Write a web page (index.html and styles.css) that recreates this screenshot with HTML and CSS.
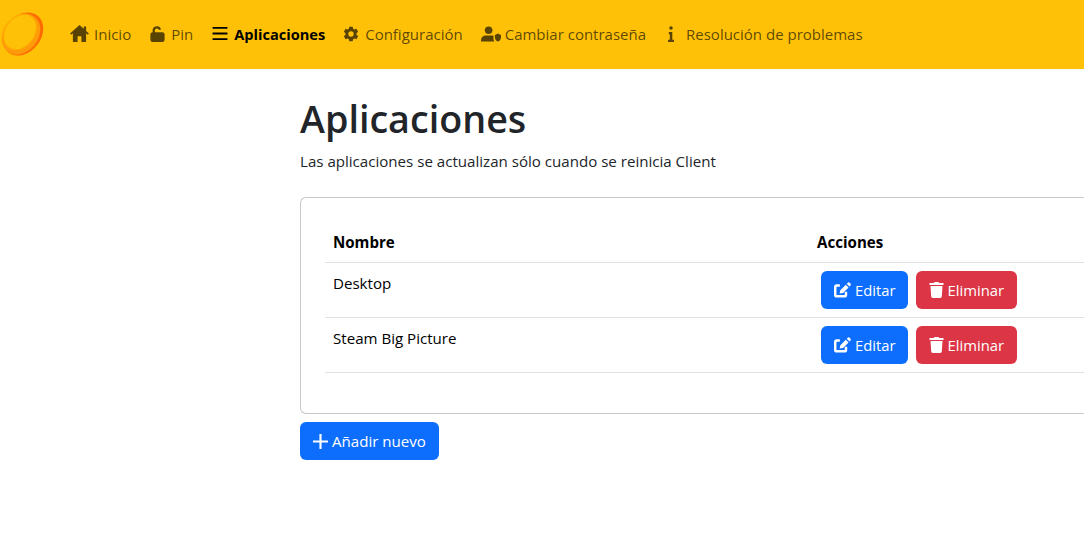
FILE: index.html
```html
<!DOCTYPE html>
<html lang="es">
<head>
    <meta charset="UTF-8">
    <meta name="viewport" content="width=device-width, initial-scale=1.0">
    <title>Aplicaciones</title>
    <link rel="stylesheet" href="styles.css">
</head>
<body>
    <nav class="navbar">
        <svg class="logo" viewBox="0 0 46 50" aria-label="Logo">
            <ellipse cx="23" cy="25" rx="18" ry="23.500" transform="rotate(38 23 25)" fill="#ff6a00"/>
            <ellipse cx="21" cy="25" rx="17.500" ry="22" transform="rotate(38 21 25)" fill="#ff9a0a"/>
            <ellipse cx="20" cy="23" rx="14.500" ry="19" transform="rotate(38 20 23)" fill="#ffc107" stroke="#ffae00"/>
        </svg>
        <a class="nav-link nav-link-wide" href="#">
            <svg class="icon icon-home" viewBox="0 0 20 18"><path d="M10 0 0 9l1.200 1.300L3 8.800V18h5v-6h4v6h5V8.800l1.800 1.500L20 9l-3-2.700V1.500h-2.500v2.600z"/></svg>
            <span>Inicio</span>
        </a>
        <a class="nav-link nav-link-wide" href="#">
            <svg class="icon icon-pin" viewBox="0 0 16 18"><path d="M2.500 7V5a4.800 4.800 0 0 1 9.500-1l-2.300.6A2.400 2.400 0 0 0 5 5v2h8.500A2.500 2.500 0 0 1 16 9.500V15.500A2.500 2.500 0 0 1 13.500 18h-11A2.500 2.500 0 0 1 0 15.500V9.500A2.500 2.500 0 0 1 2.500 7z"/></svg>
            <span>Pin</span>
        </a>
        <a class="nav-link active" href="#">
            <svg class="icon icon-bars" viewBox="0 0 16 14"><path d="M0 0h16v2H0zM0 6h16v2H0zM0 12h16v2H0z"/></svg>
            <span>Aplicaciones</span>
        </a>
        <a class="nav-link" href="#">
            <svg class="icon icon-gear" viewBox="0 0 24 24"><path fill-rule="evenodd" d="M9.500 1h5l.8 3.200 1.700 1 3.200-.9 2.500 4.300-2.400 2.300v2.200l2.400 2.300-2.500 4.300-3.200-.9-1.700 1-.8 3.200h-5l-.8-3.200-1.700-1-3.200.9-2.500-4.300 2.400-2.300v-2.200L1.300 8.600l2.500-4.300 3.200.9 1.700-1zM12 8a4 4 0 1 0 0 8 4 4 0 0 0 0-8z"/></svg>
            <span>Configuración</span>
        </a>
        <a class="nav-link" href="#">
            <svg class="icon icon-user" viewBox="0 0 21 16"><circle cx="8" cy="4" r="4"/><path d="M5 9.500h6c.8 0 1.500.1 2.100.4V13c0 1 .4 2 1 3H0v-1.500A5 5 0 0 1 5 9.500z"/><path d="M17.800 7.500 21 9v2.500c0 2.300-1.300 3.800-3.200 4.500-1.900-.7-3.200-2.200-3.200-4.500V9z"/></svg>
            <span>Cambiar contraseña</span>
        </a>
        <a class="nav-link" href="#">
            <svg class="icon icon-info" viewBox="0 0 8 16"><circle cx="4" cy="2" r="1.800"/><path d="M1.800 6h3.500v7.800H7V16H1v-2.200h1.800V8.200h-1z"/></svg>
            <span>Resolución de problemas</span>
        </a>
    </nav>

    <main class="container">
        <h1>Aplicaciones</h1>
        <p class="subtitle">Las aplicaciones se actualizan sólo cuando se reinicia Client</p>

        <div class="card">
            <table class="apps-table">
                <thead>
                    <tr>
                        <th class="col-name">Nombre</th>
                        <th>Acciones</th>
                    </tr>
                </thead>
                <tbody>
                    <tr>
                        <td>Desktop</td>
                        <td>
                            <div class="actions">
                                <button class="btn btn-primary" type="button">
                                    <svg class="btn-icon" viewBox="0 0 18 16"><path d="M16.800.500a1.700 1.700 0 0 0-2.400 0l-.9.900 2.900 2.900.9-.9a1.700 1.700 0 0 0 0-2.400zM12.500 2.400 6.700 8.200 6 11.800l3.600-.7 5.800-5.800zM3 2a3 3 0 0 0-3 3v8a3 3 0 0 0 3 3h8a3 3 0 0 0 3-3V9.800h-2.600V13a.4.4 0 0 1-.4.4H3a.4.4 0 0 1-.4-.4V5a.4.4 0 0 1 .4-.4h3.200V2z"/></svg>
                                    <span>Editar</span>
                                </button>
                                <button class="btn btn-danger" type="button">
                                    <svg class="btn-icon btn-icon-trash" viewBox="0 0 14 16"><path d="M4.500.600 4.200 1H0v2h14V1H9.800L9.500.600A1 1 0 0 0 8.600 0H5.400a1 1 0 0 0-.9.600zM1 4l.7 10.600A1.500 1.500 0 0 0 3.200 16h7.600a1.500 1.500 0 0 0 1.500-1.400L13 4z"/></svg>
                                    <span>Eliminar</span>
                                </button>
                            </div>
                        </td>
                    </tr>
                    <tr>
                        <td>Steam Big Picture</td>
                        <td>
                            <div class="actions">
                                <button class="btn btn-primary" type="button">
                                    <svg class="btn-icon" viewBox="0 0 18 16"><path d="M16.800.500a1.700 1.700 0 0 0-2.400 0l-.9.900 2.900 2.900.9-.9a1.700 1.700 0 0 0 0-2.400zM12.500 2.400 6.700 8.200 6 11.800l3.600-.7 5.800-5.800zM3 2a3 3 0 0 0-3 3v8a3 3 0 0 0 3 3h8a3 3 0 0 0 3-3V9.800h-2.600V13a.4.4 0 0 1-.4.4H3a.4.4 0 0 1-.4-.4V5a.4.4 0 0 1 .4-.4h3.200V2z"/></svg>
                                    <span>Editar</span>
                                </button>
                                <button class="btn btn-danger" type="button">
                                    <svg class="btn-icon btn-icon-trash" viewBox="0 0 14 16"><path d="M4.500.600 4.200 1H0v2h14V1H9.800L9.500.600A1 1 0 0 0 8.600 0H5.400a1 1 0 0 0-.9.600zM1 4l.7 10.600A1.500 1.500 0 0 0 3.200 16h7.600a1.500 1.500 0 0 0 1.500-1.400L13 4z"/></svg>
                                    <span>Eliminar</span>
                                </button>
                            </div>
                        </td>
                    </tr>
                </tbody>
            </table>
        </div>

        <button class="btn btn-primary btn-add" type="button">
            <svg class="btn-icon btn-icon-plus" viewBox="0 0 14 14"><path d="M6 0h2v6h6v2H8v6H6V8H0V6h6z"/></svg>
            <span>Añadir nuevo</span>
        </button>
    </main>
</body>
</html>
```

FILE: styles.css
```css
* {
    box-sizing: border-box;
}

body {
    margin: 0;
    font-family: "Open Sans", "Noto Sans", sans-serif;
    font-size: 16px;
    line-height: 24px;
    color: #212529;
    background-color: #fff;
}

.navbar {
    display: flex;
    align-items: center;
    height: 69px;
    padding-bottom: 2px;
    background-color: #ffc107;
}

.logo {
    width: 46px;
    height: 50px;
    flex-shrink: 0;
    margin-right: 24px;
}

.nav-link {
    display: flex;
    align-items: center;
    gap: 6px;
    margin-right: 18px;
    color: rgba(0, 0, 0, 0.65);
    text-decoration: none;
    font-size: 15px;
    white-space: nowrap;
}

.nav-link-wide {
    margin-right: 19px;
}

.nav-link.active {
    color: #000;
    font-size: 14.6px;
    font-weight: 700;
}

.icon {
    height: 16px;
    flex-shrink: 0;
    fill: currentColor;
}

.icon-home {
    width: 19px;
    height: 17px;
    margin-right: -1px;
}

.icon-pin {
    width: 15px;
}

.icon-bars {
    width: 16px;
    height: 13px;
}

.icon-gear {
    width: 16px;
}

.icon-user {
    width: 20px;
    margin-right: -2px;
}

.icon-info {
    width: 8px;
    margin: 0 5px 0 3px;
}

.container {
    margin-left: 300px;
    padding-top: 26px;
}

h1 {
    margin: 0 0 6px;
    font-size: 37.7px;
    font-weight: 600;
    line-height: 48px;
}

.subtitle {
    margin: 0 0 24px;
    font-size: 15.1px;
}

.card {
    padding: 24px 0 24px 24px;
    height: 217px;
    border: 1px solid #c8c8c8;
    border-right: none;
    border-radius: 6px 0 0 6px;
}

.apps-table {
    width: 100%;
    border-collapse: collapse;
    color: #000;
    font-size: 15.1px;
}

.apps-table th, .apps-table td {
    padding: 8px;
    text-align: left;
    vertical-align: top;
    border-bottom: 1px solid #dee2e6;
}

.col-name {
    width: 484px;
}

.actions {
    display: flex;
    gap: 8px;
    margin-left: 4px;
}

.actions .btn-primary {
    padding-right: 12px;
}

.btn {
    display: inline-flex;
    align-items: center;
    height: 38px;
    padding: 0 13px;
    gap: 4px;
    border: none;
    border-radius: 6px;
    color: #fff;
    font-family: inherit;
    font-size: 14.8px;
}

.btn-primary {
    background-color: #0d6efd;
}

.btn-danger {
    background-color: #dc3545;
}

.btn-icon {
    width: 17px;
    height: 16px;
    fill: currentColor;
}

.btn-icon-trash {
    width: 15px;
}

.btn-icon-plus {
    width: 15px;
    height: 15px;
}

.btn-add {
    margin-top: 8px;
    font-size: 15.1px;
}
```
